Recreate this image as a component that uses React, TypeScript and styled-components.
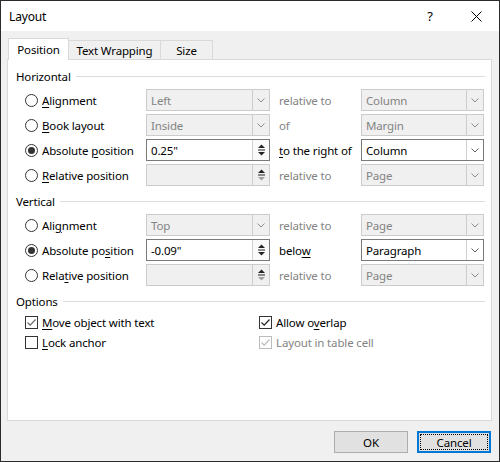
import styled, { createGlobalStyle } from "styled-components";

const GlobalStyle = createGlobalStyle`
  html, body {
    margin: 0;
    padding: 0;
    background: #f0f0f0;
  }
  * {
    box-sizing: border-box;
  }
`;

const Window = styled.div`
  width: 500px;
  height: 462px;
  border: 1px solid #2b2b2b;
  background: #f0f0f0;
  display: flex;
  flex-direction: column;
  font-family: "Noto Sans", "Open Sans", sans-serif;
  font-size: 11.5px;
  letter-spacing: -0.15px;
  color: #000;
`;

const TitleBar = styled.div`
  height: 30px;
  background: #fff;
  display: flex;
  align-items: center;
  justify-content: space-between;
  padding-left: 8px;
  font-size: 12px;
`;

const TitleButtons = styled.div`
  display: flex;
  height: 100%;
`;

const TitleButton = styled.div`
  width: 46px;
  height: 100%;
  display: flex;
  align-items: center;
  justify-content: center;
  font-size: 13px;
`;

const Body = styled.div`
  flex: 1;
  display: flex;
  flex-direction: column;
  padding: 7px 7px 0 6px;
`;

const TabStrip = styled.div`
  display: flex;
  align-items: flex-end;
  height: 21px;
  padding-left: 1px;
`;

const Tab = styled.div<{ $active?: boolean; $width: number }>`
  width: ${({ $width }) => $width}px;
  height: ${({ $active }) => ($active ? 22 : 19)}px;
  margin-bottom: ${({ $active }) => ($active ? -1 : 0)}px;
  position: relative;
  z-index: ${({ $active }) => ($active ? 1 : 0)};
  background: ${({ $active }) => ($active ? "#fff" : "#f0f0f0")};
  border: 1px solid #d9d9d9;
  border-bottom: none;
  margin-right: -1px;
  display: flex;
  align-items: center;
  justify-content: center;
  padding-top: ${({ $active }) => ($active ? 0 : 1)}px;
`;

const Panel = styled.div`
  height: 362px;
  background: #fff;
  border: 1px solid #d9d9d9;
  padding: 8px 6px 0 8px;
  display: flex;
  flex-direction: column;
  gap: 7px;
`;

const Section = styled.div`
  display: flex;
  flex-direction: column;
`;

const Heading = styled.div`
  height: 16px;
  display: flex;
  align-items: center;
  gap: 5px;
  margin-bottom: 5px;

  &::after {
    content: "";
    flex: 1;
    height: 1px;
    background: #dcdcdc;
  }
`;

const Rows = styled.div`
  display: grid;
  grid-template-columns: 121px 124px 91px 123px;
  grid-auto-rows: 22px;
  row-gap: 3px;
  margin-left: 9px;
  align-items: center;
`;

const OptionRows = styled.div`
  display: grid;
  grid-template-columns: 234px 1fr;
  grid-auto-rows: 16px;
  row-gap: 4px;
  margin-left: 9px;
  align-items: center;
`;

const Choice = styled.label<{ $disabled?: boolean }>`
  display: flex;
  align-items: center;
  gap: 4px;
  white-space: nowrap;
  color: ${({ $disabled }) => ($disabled ? "#838383" : "#000")};
`;

const Key = styled.span`
  text-decoration: underline;
  text-underline-offset: 2px;
`;

const RadioCircle = styled.span<{ $on?: boolean }>`
  width: 13px;
  height: 13px;
  border-radius: 50%;
  border: 1px solid #333;
  background: #fff;
  display: flex;
  align-items: center;
  justify-content: center;

  &::after {
    content: "";
    width: 7px;
    height: 7px;
    border-radius: 50%;
    background: ${({ $on }) => ($on ? "#333" : "transparent")};
  }
`;

const CheckBox = styled.span<{ $disabled?: boolean }>`
  width: 13px;
  height: 13px;
  border: 1px solid ${({ $disabled }) => ($disabled ? "#bcbcbc" : "#333")};
  background: #fff;
  display: flex;
  align-items: center;
  justify-content: center;
`;

const SideLabel = styled.span<{ $disabled?: boolean }>`
  padding-left: 9px;
  white-space: nowrap;
  color: ${({ $disabled }) => ($disabled ? "#838383" : "#000")};
`;

const Field = styled.div<{ $disabled?: boolean }>`
  height: 22px;
  display: flex;
  border: 1px solid ${({ $disabled }) => ($disabled ? "#cccccc" : "#7a7a7a")};
  background: ${({ $disabled }) => ($disabled ? "#f0f0f0" : "#fff")};
  color: ${({ $disabled }) => ($disabled ? "#838383" : "#000")};
`;

const FieldText = styled.div`
  flex: 1;
  display: flex;
  align-items: center;
  padding-left: 4px;
`;

const DropButton = styled.div<{ $disabled?: boolean }>`
  width: 17px;
  display: flex;
  align-items: center;
  justify-content: center;
  border-left: 1px solid ${({ $disabled }) => ($disabled ? "#cccccc" : "#d0d0d0")};
`;

const SpinButtons = styled.div<{ $disabled?: boolean }>`
  width: 17px;
  display: flex;
  align-items: center;
  justify-content: center;
  border-left: 1px solid ${({ $disabled }) => ($disabled ? "#cccccc" : "#d0d0d0")};
  background: ${({ $disabled }) => ($disabled ? "#f0f0f0" : "#fafafa")};
`;

const Footer = styled.div`
  display: flex;
  justify-content: flex-end;
  gap: 9px;
  margin-top: 10px;
  padding-right: 1px;
`;

const Button = styled.div<{ $focused?: boolean }>`
  width: 74px;
  height: 22px;
  background: #e1e1e1;
  border: ${({ $focused }) => ($focused ? "2px solid #0078d7" : "1px solid #adadad")};
  display: flex;
  align-items: center;
  justify-content: center;
  padding: ${({ $focused }) => ($focused ? "1px" : "0")};
`;

const FocusRing = styled.span`
  flex: 1;
  align-self: stretch;
  display: flex;
  align-items: center;
  justify-content: center;
  border: 1px dotted #000;
`;

const Chevron = ({ disabled }: { disabled?: boolean }) => (
  <svg width="8" height="5" viewBox="0 0 8 5">
    <path d="M0.5 0.5 L4 4 L7.5 0.5" fill="none" stroke={disabled ? "#8c8c8c" : "#606060"} strokeWidth="1" />
  </svg>
);

const SpinGlyph = ({ downDim }: { downDim?: boolean }) => (
  <svg width="9" height="14" viewBox="0 0 9 14">
    <path d="M1 5 L4.5 1.5 L8 5 Z" fill="#222" />
    <rect x="1" y="6.5" width="7" height="1" fill="#222" />
    <path d="M1 9 L8 9 L4.5 12.5 Z" fill={downDim ? "#a0a0a0" : "#222"} />
  </svg>
);

const Tick = ({ color }: { color: string }) => (
  <svg width="11" height="11" viewBox="0 0 11 11">
    <path d="M1.5 5.5 L4.2 8.2 L9.5 2.5" fill="none" stroke={color} strokeWidth="1.2" />
  </svg>
);

const Radio = ({ on, children }: { on?: boolean; children: React.ReactNode }) => (
  <Choice>
    <RadioCircle $on={on} />
    <span>{children}</span>
  </Choice>
);

const Combo = ({ value, disabled }: { value: string; disabled?: boolean }) => (
  <Field $disabled={disabled}>
    <FieldText>{value}</FieldText>
    <DropButton $disabled={disabled}>
      <Chevron disabled={disabled} />
    </DropButton>
  </Field>
);

const Spinner = ({ value, disabled }: { value: string; disabled?: boolean }) => (
  <Field $disabled={disabled}>
    <FieldText>{value}</FieldText>
    <SpinButtons $disabled={disabled}>
      <SpinGlyph downDim={disabled} />
    </SpinButtons>
  </Field>
);

const Check = ({
  checked,
  disabled,
  tickColor = "#222",
  children,
}: {
  checked?: boolean;
  disabled?: boolean;
  tickColor?: string;
  children: React.ReactNode;
}) => (
  <Choice $disabled={disabled}>
    <CheckBox $disabled={disabled}>{checked && <Tick color={disabled ? "#bcbcbc" : tickColor} />}</CheckBox>
    <span>{children}</span>
  </Choice>
);

export default function App() {
  return (
    <>
      <GlobalStyle />
      <Window>
        <TitleBar>
          <span>Layout</span>
          <TitleButtons>
            <TitleButton>?</TitleButton>
            <TitleButton>
              <svg width="11" height="11" viewBox="0 0 11 11">
                <path d="M0.5 0.5 L10.5 10.5 M10.5 0.5 L0.5 10.5" stroke="#000" strokeWidth="1" />
              </svg>
            </TitleButton>
          </TitleButtons>
        </TitleBar>
        <Body>
          <TabStrip>
            <Tab $active $width={61}>Position</Tab>
            <Tab $width={93}>Text Wrapping</Tab>
            <Tab $width={53}>Size</Tab>
          </TabStrip>
          <Panel>
            <Section>
              <Heading>Horizontal</Heading>
              <Rows>
                <Radio><Key>A</Key>lignment</Radio>
                <Combo value="Left" disabled />
                <SideLabel $disabled>relative to</SideLabel>
                <Combo value="Column" disabled />

                <Radio><Key>B</Key>ook layout</Radio>
                <Combo value="Inside" disabled />
                <SideLabel $disabled>of</SideLabel>
                <Combo value="Margin" disabled />

                <Radio on>Absolute <Key>p</Key>osition</Radio>
                <Spinner value={'0.25"'} />
                <SideLabel><Key>t</Key>o the right of</SideLabel>
                <Combo value="Column" />

                <Radio><Key>R</Key>elative position</Radio>
                <Spinner value="" disabled />
                <SideLabel $disabled>relative to</SideLabel>
                <Combo value="Page" disabled />
              </Rows>
            </Section>
            <Section>
              <Heading>Vertical</Heading>
              <Rows>
                <Radio>Ali<Key>g</Key>nment</Radio>
                <Combo value="Top" disabled />
                <SideLabel $disabled>relative to</SideLabel>
                <Combo value="Page" disabled />

                <Radio on>Absolute po<Key>s</Key>ition</Radio>
                <Spinner value={'-0.09"'} />
                <SideLabel>belo<Key>w</Key></SideLabel>
                <Combo value="Paragraph" />

                <Radio>Rela<Key>t</Key>ive position</Radio>
                <Spinner value="" disabled />
                <SideLabel $disabled>relative to</SideLabel>
                <Combo value="Page" disabled />
              </Rows>
            </Section>
            <Section>
              <Heading>Options</Heading>
              <OptionRows>
                <Check checked tickColor="#6b6b6b"><Key>M</Key>ove object with text</Check>
                <Check checked>Allow o<Key>v</Key>erlap</Check>
                <Check><Key>L</Key>ock anchor</Check>
                <Check checked disabled>Layout in table cell</Check>
              </OptionRows>
            </Section>
          </Panel>
          <Footer>
            <Button>OK</Button>
            <Button $focused>
              <FocusRing>Cancel</FocusRing>
            </Button>
          </Footer>
        </Body>
      </Window>
    </>
  );
}
